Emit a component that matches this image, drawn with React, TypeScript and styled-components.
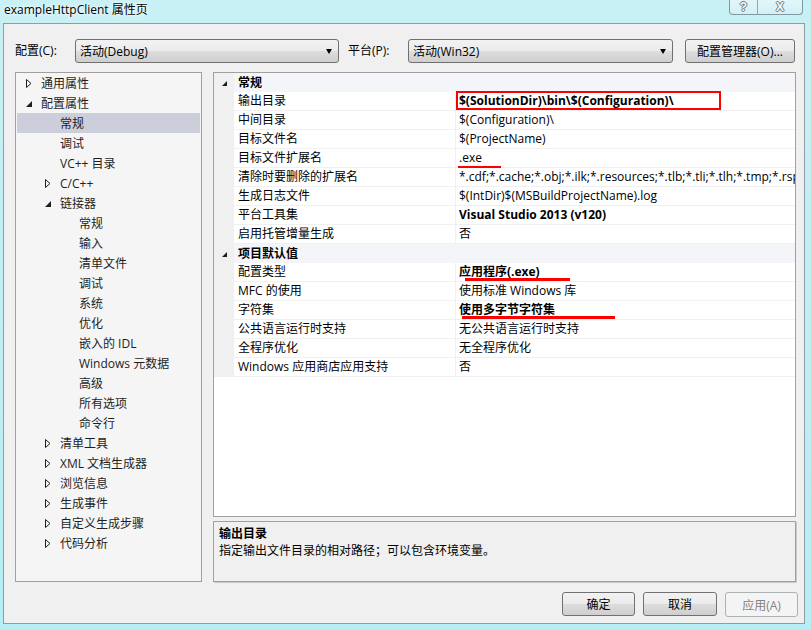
import React from "react";
import styled, { createGlobalStyle } from "styled-components";

const FONT = `"Open Sans", "Noto Sans CJK SC", sans-serif`;

const GlobalStyle = createGlobalStyle`
  html, body { margin: 0; padding: 0; }
  body {
    width: 811px; height: 630px; overflow: hidden;
    font-family: ${FONT}; font-size: 12px; color: #000;
  }
  * { box-sizing: border-box; }
`;

const Frame = styled.div`
  width: 811px;
  height: 630px;
  display: flex;
  flex-direction: column;
  padding: 0 6px 6px 3px;
  background: linear-gradient(180deg, #c8f1f5 0%, #c1eff4 40%, #b6eef5 100%);
`;

const TitleBar = styled.div`
  height: 23px;
  display: flex;
  justify-content: space-between;
  align-items: flex-start;
  flex: none;
`;

const Title = styled.div`
  padding: 2px 0 0 1px;
  line-height: 16px;
  font-size: 12px;
  color: #000;
  text-shadow: 0 0 6px #fff, 0 0 3px #fff;
`;

const CaptionBox = styled.div`
  display: flex;
  height: 15px;
  margin-right: 2px;
  border: 1px solid #7f9aa6;
  border-top: none;
  border-radius: 0 0 4px 4px;
  background: linear-gradient(180deg, #e2f6f8 0%, #d2f0f4 100%);
  overflow: hidden;
`;

const CaptionButton = styled.div<{ $w: number }>`
  width: ${(p) => p.$w}px;
  display: flex;
  align-items: center;
  justify-content: center;
  font-family: "Liberation Sans", sans-serif;
  font-weight: bold;
  font-size: 12px;
  color: #f4f8f9;
  text-shadow: -1px 0 #6d7b82, 1px 0 #6d7b82, 0 -1px #6d7b82, 0 1px #6d7b82;
  & + & { border-left: 1px solid #8fa9b3; }
`;

const Client = styled.div`
  flex: 1;
  display: flex;
  flex-direction: column;
  border: 1px solid #8e9ca3;
  background: #f0f0f0;
`;

const Toolbar = styled.div`
  display: flex;
  align-items: center;
  height: 24px;
  margin-top: 15px;
  padding-left: 11px;
`;

const Label = styled.div<{ $w: number; $ml?: number }>`
  width: ${(p) => p.$w}px;
  margin-left: ${(p) => p.$ml ?? 0}px;
  line-height: 24px;
  white-space: nowrap;
`;

const Select = styled.div<{ $w: number }>`
  width: ${(p) => p.$w}px;
  height: 24px;
  display: flex;
  align-items: center;
  justify-content: space-between;
  padding: 0 6px 0 4px;
  border: 1px solid #707070;
  border-radius: 3px;
  background: linear-gradient(180deg, #f2f2f2 0%, #ebebeb 50%, #dddddd 51%, #cfcfcf 100%);
  white-space: nowrap;
`;

const Arrow = styled.span`
  width: 0;
  height: 0;
  border-left: 3.5px solid transparent;
  border-right: 3.5px solid transparent;
  border-top: 5px solid #000;
`;

const PushButton = styled.div<{ $w: number; $ml?: number; $disabled?: boolean }>`
  width: ${(p) => p.$w}px;
  height: ${(p) => (p.$disabled ? 25 : 24)}px;
  margin-left: ${(p) => p.$ml ?? 0}px;
  display: flex;
  align-items: center;
  justify-content: center;
  border: 1px solid ${(p) => (p.$disabled ? "#adb2b5" : "#707070")};
  border-radius: 3px;
  color: ${(p) => (p.$disabled ? "#838383" : "#000")};
  background: ${(p) =>
    p.$disabled
      ? "#f4f4f4"
      : "linear-gradient(180deg, #f2f2f2 0%, #ebebeb 50%, #dddddd 51%, #cfcfcf 100%)"};
  white-space: nowrap;
`;

const Main = styled.div`
  display: flex;
  gap: 11px;
  height: 510px;
  margin-top: 9px;
  padding-left: 11px;
`;

const Tree = styled.div`
  width: 187px;
  flex: none;
  border: 1px solid #a0a0a0;
  background: #f5f5f5;
  padding: 0 1px;
  color: #1e1e1e;
`;

const TreeRow = styled.div<{ $selected?: boolean }>`
  display: flex;
  align-items: center;
  height: 20px;
  background: ${(p) => (p.$selected ? "#cccedb" : "transparent")};
  white-space: nowrap;
`;

const Toggle = styled.div<{ $indent: number }>`
  width: 24px;
  margin-left: ${(p) => p.$indent}px;
  flex: none;
  display: flex;
  align-items: center;
  padding-left: 9px;
  height: 20px;
`;

const RightCol = styled.div`
  width: 583px;
  flex: none;
  display: flex;
  flex-direction: column;
  gap: 4px;
`;

const Grid = styled.div`
  flex: 1;
  border: 1px solid #a0a0a0;
  background: #fff;
  overflow: hidden;
`;

const GridRow = styled.div`
  display: grid;
  grid-template-columns: 20px 221px minmax(0, 1fr);
  height: 19px;
`;

const Gutter = styled.div`
  background: #f0f0f0;
  display: flex;
  align-items: center;
  justify-content: center;
`;

const CategoryLabel = styled.div`
  grid-column: 2 / 4;
  background: #f3f5f8;
  font-weight: bold;
  padding-left: 4px;
  line-height: 19px;
`;

const NameCell = styled.div`
  border-bottom: 1px solid #f0f0f0;
  padding-left: 4px;
  line-height: 18px;
  white-space: nowrap;
  overflow: hidden;
`;

const ValueCell = styled.div<{ $bold?: boolean }>`
  position: relative;
  min-width: 0;
  border-bottom: 1px solid #f0f0f0;
  border-left: 1px solid #f0f0f0;
  padding-left: 3px;
  line-height: 18px;
  white-space: nowrap;
  font-weight: ${(p) => (p.$bold ? "bold" : "normal")};
`;

const ValueText = styled.div`
  overflow: hidden;
`;

const RedBox = styled.div`
  position: absolute;
  left: 0;
  top: -1px;
  width: 265px;
  height: 19px;
  border: 2px solid #ff0000;
`;

const RedLine = styled.div<{ $left: number; $top: number; $w: number; $h: number }>`
  position: absolute;
  left: ${(p) => p.$left}px;
  top: ${(p) => p.$top}px;
  width: ${(p) => p.$w}px;
  height: ${(p) => p.$h}px;
  background: #ff0000;
`;

const Desc = styled.div`
  height: 61px;
  flex: none;
  border: 1px solid #a0a0a0;
  box-shadow: 1px 1px 0 #c9c9c9;
  background: #f0f0f0;
  padding: 3px 5px;
  line-height: 17px;
`;

const DescTitle = styled.div`
  font-weight: bold;
`;

const Buttons = styled.div`
  display: flex;
  justify-content: flex-end;
  margin-top: 10px;
  padding-right: 6px;
`;

const CollapsedIcon = () => (
  <svg width="6" height="9" viewBox="0 0 6 9">
    <path d="M0.5 0.5 L5 4.5 L0.5 8.5 Z" fill="none" stroke="#1e1e1e" strokeWidth="1" />
  </svg>
);

const ExpandedIcon = ({ size = 6 }: { size?: number }) => (
  <svg width={size} height={size} viewBox="0 0 6 6" style={{ marginTop: 2 }}>
    <path d="M6 0 L6 6 L0 6 Z" fill="#1e1e1e" />
  </svg>
);

type TreeItem = { label: string; level: number; state?: "open" | "closed"; selected?: boolean };

const treeItems: TreeItem[] = [
  { label: "通用属性", level: 0, state: "closed" },
  { label: "配置属性", level: 0, state: "open" },
  { label: "常规", level: 1, selected: true },
  { label: "调试", level: 1 },
  { label: "VC++ 目录", level: 1 },
  { label: "C/C++", level: 1, state: "closed" },
  { label: "链接器", level: 1, state: "open" },
  { label: "常规", level: 2 },
  { label: "输入", level: 2 },
  { label: "清单文件", level: 2 },
  { label: "调试", level: 2 },
  { label: "系统", level: 2 },
  { label: "优化", level: 2 },
  { label: "嵌入的 IDL", level: 2 },
  { label: "Windows 元数据", level: 2 },
  { label: "高级", level: 2 },
  { label: "所有选项", level: 2 },
  { label: "命令行", level: 2 },
  { label: "清单工具", level: 1, state: "closed" },
  { label: "XML 文档生成器", level: 1, state: "closed" },
  { label: "浏览信息", level: 1, state: "closed" },
  { label: "生成事件", level: 1, state: "closed" },
  { label: "自定义生成步骤", level: 1, state: "closed" },
  { label: "代码分析", level: 1, state: "closed" },
];

type Prop =
  | { cat: string }
  | { name: string; value: string; bold?: boolean; mark?: "box" | "exe" | "app" | "charset" };

const props: Prop[] = [
  { cat: "常规" },
  { name: "输出目录", value: "$(SolutionDir)\\bin\\$(Configuration)\\", bold: true, mark: "box" },
  { name: "中间目录", value: "$(Configuration)\\" },
  { name: "目标文件名", value: "$(ProjectName)" },
  { name: "目标文件扩展名", value: ".exe", mark: "exe" },
  {
    name: "清除时要删除的扩展名",
    value:
      "*.cdf;*.cache;*.obj;*.ilk;*.resources;*.tlb;*.tli;*.tlh;*.tmp;*.rsp;*.pgc;*.pgd;*.meta;*.tlog;*.manifest;*.res;*.pch;*.exp;*.idb;*.rep;*.xdc;*.pdb;*_manifest.rc;*.bsc;*.sbr;*.xml;*.metagen;*.bi",
  },
  { name: "生成日志文件", value: "$(IntDir)$(MSBuildProjectName).log" },
  { name: "平台工具集", value: "Visual Studio 2013 (v120)", bold: true },
  { name: "启用托管增量生成", value: "否" },
  { cat: "项目默认值" },
  { name: "配置类型", value: "应用程序(.exe)", bold: true, mark: "app" },
  { name: "MFC 的使用", value: "使用标准 Windows 库" },
  { name: "字符集", value: "使用多字节字符集", bold: true, mark: "charset" },
  { name: "公共语言运行时支持", value: "无公共语言运行时支持" },
  { name: "全程序优化", value: "无全程序优化" },
  { name: "Windows 应用商店应用支持", value: "否" },
];

const renderMark = (mark?: string) => {
  switch (mark) {
    case "box":
      return <RedBox />;
    case "exe":
      return <RedLine $left={2} $top={17} $w={43} $h={2} />;
    case "app":
      return <RedLine $left={9} $top={15} $w={105} $h={3} />;
    case "charset":
      return <RedLine $left={6} $top={15} $w={153} $h={3} />;
    default:
      return null;
  }
};

export default function App() {
  return (
    <>
      <GlobalStyle />
      <Frame>
        <TitleBar>
          <Title>exampleHttpClient 属性页</Title>
          <CaptionBox>
            <CaptionButton $w={27}>?</CaptionButton>
            <CaptionButton $w={45}>X</CaptionButton>
          </CaptionBox>
        </TitleBar>
        <Client>
          <Toolbar>
            <Label $w={60}>配置(C):</Label>
            <Select $w={264}>
              <span>活动(Debug)</span>
              <Arrow />
            </Select>
            <Label $w={60} $ml={9}>平台(P):</Label>
            <Select $w={265}>
              <span>活动(Win32)</span>
              <Arrow />
            </Select>
            <PushButton $w={110} $ml={12}>配置管理器(O)...</PushButton>
          </Toolbar>
          <Main>
            <Tree>
              {treeItems.map((it, i) => (
                <TreeRow key={i} $selected={it.selected}>
                  <Toggle $indent={it.level * 19}>
                    {it.state === "closed" && <CollapsedIcon />}
                    {it.state === "open" && <ExpandedIcon />}
                  </Toggle>
                  <span>{it.label}</span>
                </TreeRow>
              ))}
            </Tree>
            <RightCol>
              <Grid>
                {props.map((p, i) =>
                  "cat" in p ? (
                    <GridRow key={i}>
                      <Gutter>
                        <ExpandedIcon size={5} />
                      </Gutter>
                      <CategoryLabel>{p.cat}</CategoryLabel>
                    </GridRow>
                  ) : (
                    <GridRow key={i}>
                      <Gutter />
                      <NameCell>{p.name}</NameCell>
                      <ValueCell $bold={p.bold}>
                        <ValueText>{p.value}</ValueText>
                        {renderMark(p.mark)}
                      </ValueCell>
                    </GridRow>
                  )
                )}
              </Grid>
              <Desc>
                <DescTitle>输出目录</DescTitle>
                <div>指定输出文件目录的相对路径；可以包含环境变量。</div>
              </Desc>
            </RightCol>
          </Main>
          <Buttons>
            <PushButton $w={73}>确定</PushButton>
            <PushButton $w={74} $ml={8}>取消</PushButton>
            <PushButton $w={73} $ml={8} $disabled>应用(A)</PushButton>
          </Buttons>
        </Client>
      </Frame>
    </>
  );
}
